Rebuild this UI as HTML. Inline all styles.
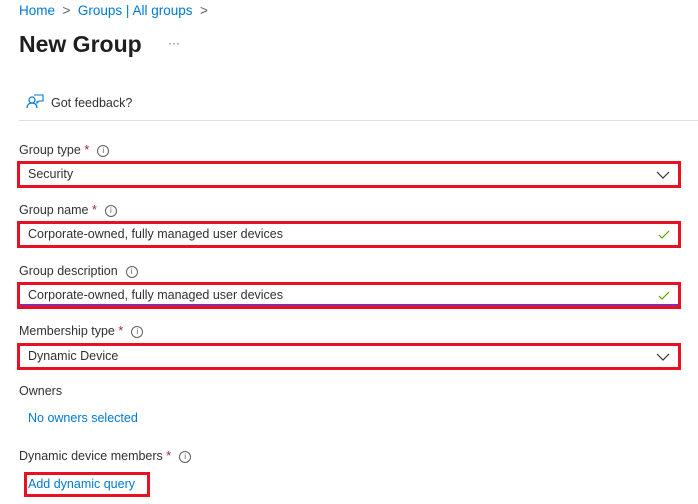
<!DOCTYPE html>
<html><head><style>
body{margin:0;width:698px;height:504px;background:#fff;font-family:"Liberation Sans",sans-serif;color:#323130;position:relative;overflow:hidden}
.a{position:absolute;white-space:nowrap}
.lbl{font-size:12.5px;color:#323130}
.req{color:#a4262c}
.info{display:inline-block;width:10px;height:10px;border:1px solid #605e5c;border-radius:50%;font-size:8px;line-height:10px;text-align:center;color:#605e5c;margin-left:8px;vertical-align:1px}
.box{position:absolute;left:17px;width:650px;height:21px;border:3px solid #e81123;font-size:12.5px;line-height:21px;padding-left:8px;box-sizing:content-box}
.chev{position:absolute;right:8px;top:6px}
.chk{position:absolute;right:8px;top:6px}
.link{color:#0078d4}
</style></head><body>
<div class="a link" style="left:19px;top:3px;font-size:13.5px">Home <span style="color:#605e5c">&nbsp;&gt;&nbsp;</span> Groups | All groups <span style="color:#605e5c">&nbsp;&gt;</span></div>
<div class="a" style="left:19px;top:31px;font-size:23px;font-weight:bold;color:#201f1e">New Group</div>
<div class="a" style="left:168px;top:36px;font-size:12px;color:#605e5c">···</div>
<svg class="a" style="left:26px;top:94px" width="18" height="16" viewBox="0 0 18 16"><circle cx="6" cy="6" r="3" fill="none" stroke="#0078d4" stroke-width="1.2"/><path d="M1 14c0-3 2-5 5-5s5 2 5 5" fill="none" stroke="#0078d4" stroke-width="1.2"/><path d="M8 1h9v6h-4l-2 2V7" fill="none" stroke="#0078d4" stroke-width="1.1"/></svg>
<div class="a" style="left:51px;top:96px;font-size:12.5px">Got feedback?</div>
<div class="a" style="left:19px;top:120px;width:679px;height:1px;background:#e1dfdd"></div>

<div class="a lbl" style="left:19px;top:143px">Group type <span class="req">*</span><span class="info">i</span></div>
<div class="box" style="top:161px">Security<svg class="chev" width="14" height="10"><path d="M1 2l6 6 6-6" fill="none" stroke="#323130" stroke-width="1.2"/></svg></div>

<div class="a lbl" style="left:19px;top:203px">Group name <span class="req">*</span><span class="info">i</span></div>
<div class="box" style="top:221px">Corporate-owned, fully managed user devices<svg class="chk" width="12" height="10"><path d="M1 5l3 3 7-7" fill="none" stroke="#57a300" stroke-width="1.2"/></svg></div>

<div class="a lbl" style="left:19px;top:264px">Group description<span class="info">i</span></div>
<div class="box" style="top:282px;box-shadow:inset 0 -2px 0 #8a2da5">Corporate-owned, fully managed user devices<svg class="chk" width="12" height="10"><path d="M1 5l3 3 7-7" fill="none" stroke="#57a300" stroke-width="1.2"/></svg></div>

<div class="a lbl" style="left:19px;top:324px">Membership type <span class="req">*</span><span class="info">i</span></div>
<div class="box" style="top:343px">Dynamic Device<svg class="chev" width="14" height="10"><path d="M1 2l6 6 6-6" fill="none" stroke="#323130" stroke-width="1.2"/></svg></div>

<div class="a lbl" style="left:19px;top:384px">Owners</div>
<div class="a link" style="left:28px;top:411px;font-size:12.5px">No owners selected</div>
<div class="a lbl" style="left:19px;top:449px">Dynamic device members <span class="req">*</span><span class="info">i</span></div>
<div class="a link" style="left:24px;top:472px;width:119px;height:19px;border:3px solid #e81123;font-size:12.5px;line-height:19px;padding-left:1px">Add dynamic query</div>
</body></html>
